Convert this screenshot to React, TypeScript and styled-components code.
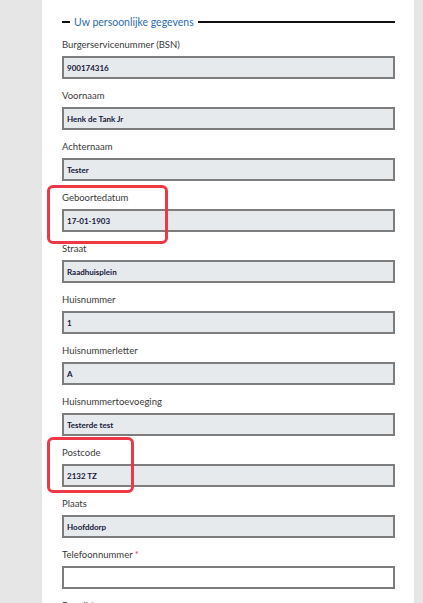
import styled, { createGlobalStyle } from "styled-components"

const GlobalStyle = createGlobalStyle`
  body {
    margin: 0;
    background: #e6e6e6;
    font-family: Lato, "Open Sans", sans-serif;
  }
`

const Page = styled.div`
  padding-left: 42px;
  height: 603px;
  overflow: hidden;
`

const Panel = styled.div`
  width: 372px;
  min-height: 603px;
  box-sizing: border-box;
  background: #fff;
  padding: 14px 19px 0 20px;
`

const LegendRow = styled.div`
  display: flex;
  align-items: center;
  gap: 4px;
  height: 16px;
  color: #2d6db0;
  font-size: 10.5px;
`

const Rule = styled.span<{ $grow?: boolean }>`
  height: 1.5px;
  background: #111;
  width: ${(p) => (p.$grow ? "auto" : "8px")};
  flex: ${(p) => (p.$grow ? "1" : "none")};
`

const Fields = styled.div`
  display: flex;
  flex-direction: column;
  gap: 10px;
  margin-top: 8px;
`

const Field = styled.div`
  position: relative;
  display: flex;
  flex-direction: column;
  gap: 4px;
`

const Label = styled.label`
  height: 14px;
  line-height: 14px;
  font-size: 9.5px;
  color: #3a3a3a;
`

const Required = styled.span`
  color: #e2457c;
`

const Input = styled.div<{ $empty?: boolean }>`
  height: 23px;
  box-sizing: border-box;
  border: 2px solid #7d7d7d;
  background: ${(p) => (p.$empty ? "#fff" : "#e7eaed")};
  padding-left: 3px;
  display: flex;
  align-items: center;
  font-size: 8px;
  font-weight: 700;
  color: #15163a;
`

const Highlight = styled.div<{ $top: number; $width: number; $height: number }>`
  position: absolute;
  left: -15px;
  top: ${(p) => p.$top}px;
  width: ${(p) => p.$width}px;
  height: ${(p) => p.$height}px;
  box-sizing: border-box;
  border: 3.5px solid #ee3848;
  border-radius: 6px;
  pointer-events: none;
`

type Item = {
  label: string
  value?: string
  required?: boolean
  mark?: { top: number; width: number; height: number }
}

const items: Item[] = [
  { label: "Burgerservicenummer (BSN)", value: "900174316" },
  { label: "Voornaam", value: "Henk de Tank Jr" },
  { label: "Achternaam", value: "Tester" },
  { label: "Geboortedatum", value: "17-01-1903", mark: { top: -6, width: 121, height: 59 } },
  { label: "Straat", value: "Raadhuisplein" },
  { label: "Huisnummer", value: "1" },
  { label: "Huisnummerletter", value: "A" },
  { label: "Huisnummertoevoeging", value: "Testerde test" },
  { label: "Postcode", value: "2132 TZ", mark: { top: -9, width: 87, height: 56 } },
  { label: "Plaats", value: "Hoofddorp" },
  { label: "Telefoonnummer", required: true },
  { label: "E-mail", required: true },
]

export default function App() {
  return (
    <Page>
      <GlobalStyle />
      <Panel>
        <LegendRow>
          <Rule />
          <span>Uw persoonlijke gegevens</span>
          <Rule $grow />
        </LegendRow>
        <Fields>
          {items.map((item) => (
            <Field key={item.label}>
              <Label>
                {item.label}
                {item.required && <Required> *</Required>}
              </Label>
              <Input $empty={!item.value}>{item.value}</Input>
              {item.mark && (
                <Highlight
                  $top={item.mark.top}
                  $width={item.mark.width}
                  $height={item.mark.height}
                />
              )}
            </Field>
          ))}
        </Fields>
      </Panel>
    </Page>
  )
}
